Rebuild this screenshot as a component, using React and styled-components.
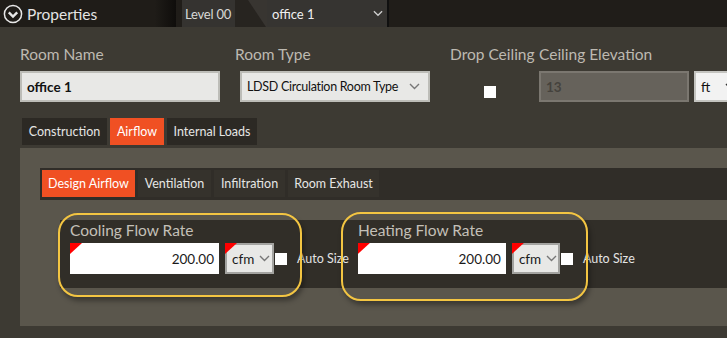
import React from "react";
import styled, { createGlobalStyle } from "styled-components";

const GlobalStyle = createGlobalStyle`
  html, body { margin: 0; padding: 0; }
  body {
    background: #3d3a33;
    font-family: Lato, "Noto Sans", sans-serif;
    width: 727px;
    height: 338px;
    overflow: hidden;
  }
  * { box-sizing: border-box; }
`;

const Page = styled.div`
  width: 727px;
  height: 338px;
  overflow: hidden;
  background: #3d3a33;
`;

/* ---------- header ---------- */
const Header = styled.div`
  height: 27px;
  background: #201d19;
  display: flex;
  align-items: stretch;
`;

const TitleBlock = styled.div`
  width: 176px;
  flex: none;
  display: flex;
  align-items: center;
  gap: 4px;
  padding-left: 3px;
  background: linear-gradient(to right, #1f1c18 88%, #0f0d0b 100%);
  color: #e4e4e4;
  font-size: 15.5px;
`;

const LevelTab = styled.div`
  margin-left: 6px;
  width: 53px;
  flex: none;
  background: #353330;
  color: #d8d8d6;
  font-size: 13px;
  display: flex;
  align-items: center;
  padding-left: 3px;
  letter-spacing: -0.2px;
`;

const Slope = styled.div`
  width: 32px;
  flex: none;
  display: flex;
  svg { display: block; }
`;

const OfficeDrop = styled.div`
  width: 120px;
  flex: none;
  background: #363431;
  color: #f0f0f0;
  font-size: 13px;
  display: flex;
  align-items: center;
  justify-content: space-between;
  padding: 0 4px 0 5px;
  box-shadow: 2px 0 0 #101010;
`;

/* ---------- main ---------- */
const Main = styled.div`
  padding: 17px 0 0 20px;
`;

const FieldsRow = styled.div`
  display: flex;
  align-items: flex-start;
`;

const Field = styled.div`
  flex: none;
  display: flex;
  flex-direction: column;
  width: ${(p) => p.$w}px;
  margin-left: ${(p) => p.$ml || 0}px;
`;

const Label = styled.div`
  color: #bdb9b1;
  font-size: 15.5px;
  line-height: 20px;
  height: 20px;
  margin-bottom: 7px;
  white-space: nowrap;
`;

const TextBox = styled.div`
  flex: none;
  height: 31px;
  width: ${(p) => p.$w}px;
  margin-left: ${(p) => p.$ml || 0}px;
  background: ${(p) => p.$bg || "#e8e8e6"};
  border: 2px solid ${(p) => p.$border || "#bdbdb8"};
  color: ${(p) => p.$color || "#111"};
  font-size: ${(p) => p.$fs || 13.5}px;
  letter-spacing: ${(p) => p.$ls || 0}px;
  font-weight: ${(p) => (p.$bold ? 700 : 400)};
  display: flex;
  align-items: center;
  justify-content: space-between;
  padding: 0 ${(p) => p.$pr || 6}px 0 5px;
  white-space: nowrap;
  overflow: hidden;
`;

const CheckWrap = styled.div`
  display: flex;
  padding: 15px 0 0 ${(p) => p.$pl || 0}px;
`;

const Check = styled.div`
  width: 12px;
  height: 12px;
  background: #ffffff;
  flex: none;
  margin-left: ${(p) => p.$ml || 0}px;
`;

const InlineRow = styled.div`
  display: flex;
  gap: 5px;
`;

/* ---------- tabs ---------- */
const TabBar = styled.div`
  display: flex;
  gap: ${(p) => p.$gap}px;
  margin: ${(p) => p.$margin || 0};
  padding: ${(p) => p.$pad || 0};
  background: ${(p) => p.$bg || "transparent"};
`;

const Tab = styled.div`
  height: 27px;
  width: ${(p) => p.$w}px;
  flex: none;
  display: flex;
  align-items: center;
  justify-content: center;
  background: ${(p) => (p.$active ? "#f05023" : p.$bg || "#2c2924")};
  color: ${(p) => (p.$active ? "#ffffff" : "#e6e6e4")};
  font-size: 12.5px;
  white-space: nowrap;
`;

const Panel = styled.div`
  margin-top: 3px;
  background: #5a564c;
  height: 178px;
  padding: 20px 0 0 20px;
`;

const FlowStrip = styled.div`
  margin: 20px 0 0 20px;
  height: 68px;
  background: #312e28;
  display: flex;
  align-items: flex-start;
  gap: 9px;
  padding: 0 0 0 10px;
`;

const FlowGroup = styled.div`
  position: relative;
  flex: none;
  display: flex;
  flex-direction: column;
  &::before {
    content: "";
    position: absolute;
    left: ${(p) => p.$ring[0]}px;
    top: ${(p) => p.$ring[1]}px;
    width: ${(p) => p.$ring[2]}px;
    height: ${(p) => p.$ring[3]}px;
    border: 2px solid #f3c542;
    border-radius: 20px;
    box-shadow: 2px 4px 5px rgba(0, 0, 0, 0.35);
    pointer-events: none;
  }
`;

const FlowLabel = styled.div`
  color: #c4c0b8;
  font-size: 15.5px;
  line-height: 20px;
  height: 20px;
  margin-bottom: 3px;
  white-space: nowrap;
`;

const FlowRow = styled.div`
  display: flex;
  align-items: center;
`;

const Flagged = styled.div`
  position: relative;
  flex: none;
  height: 31px;
  width: ${(p) => p.$w}px;
  margin-right: ${(p) => p.$mr || 0}px;
  background: ${(p) => p.$bg};
  border: ${(p) => (p.$border ? `2px solid ${p.$border}` : "none")};
  color: #1a1a1a;
  font-size: 13.5px;
  display: flex;
  align-items: center;
  justify-content: ${(p) => p.$justify};
  gap: 5px;
  padding: 0 ${(p) => p.$pr}px 0 ${(p) => p.$pl}px;
  &::before {
    content: "";
    position: absolute;
    left: ${(p) => (p.$border ? -2 : 0)}px;
    top: ${(p) => (p.$border ? -2 : 0)}px;
    width: 12px;
    height: 11px;
    background: #ff0000;
    clip-path: polygon(0 0, 100% 0, 0 100%);
  }
`;

const AutoSize = styled.div`
  color: #e4e4e4;
  font-size: 12.5px;
  margin-left: 10px;
  white-space: nowrap;
`;

const Chevron = ({ color = "#777", w = 11 }) => (
  <svg width={w} height="7" viewBox="0 0 11 7" style={{ flex: "none" }}>
    <polyline points="1,1 5.5,5.5 10,1" fill="none" stroke={color} strokeWidth="1.4" />
  </svg>
);

const CircleChevron = () => (
  <svg width="20" height="20" viewBox="0 0 20 20">
    <circle cx="10" cy="10" r="8.6" fill="none" stroke="#e8e8e8" strokeWidth="1.5" />
    <polyline points="5.8,8.3 10,12.5 14.2,8.3" fill="none" stroke="#e8e8e8" strokeWidth="2.4" />
  </svg>
);

const FlowRate = ({ title, ring, inputW, selW }) => (
  <FlowGroup $ring={ring}>
    <FlowLabel>{title}</FlowLabel>
    <FlowRow>
      <Flagged $w={inputW} $bg="#ffffff" $justify="flex-end" $pl={4} $pr={5} $mr={6}>
        200.00
      </Flagged>
      <Flagged $w={selW} $bg="#e8e8e6" $border="#a3a3a0" $justify="flex-start" $pl={5} $pr={2}>
        cfm <Chevron />
      </Flagged>
      <Check $ml={1} />
      <AutoSize>Auto Size</AutoSize>
    </FlowRow>
  </FlowGroup>
);

export default function App() {
  return (
    <Page>
      <GlobalStyle />
      <Header>
        <TitleBlock>
          <CircleChevron />
          <span>Properties</span>
        </TitleBlock>
        <LevelTab>Level 00</LevelTab>
        <Slope>
          <svg width="32" height="27" viewBox="0 0 32 27">
            <rect x="0" y="0" width="32" height="27" fill="#272420" />
            <polygon points="13,0 32,0 32,27 31,27" fill="#383531" />
          </svg>
        </Slope>
        <OfficeDrop>
          <span>office 1</span>
          <Chevron color="#cfcfcf" w={10} />
        </OfficeDrop>
      </Header>

      <Main>
        <FieldsRow>
          <Field $w={200}>
            <Label>Room Name</Label>
            <TextBox $w={200} $bold>office 1</TextBox>
          </Field>
          <Field $w={195} $ml={15}>
            <Label>Room Type</Label>
            <TextBox $w={190} $ml={5} $fs={12.5} $ls={-0.3} $pr={8}>
              LDSD Circulation Room Type <Chevron />
            </TextBox>
          </Field>
          <Field $w={89} $ml={20}>
            <Label>Drop Ceiling</Label>
            <CheckWrap $pl={34}>
              <Check />
            </CheckWrap>
          </Field>
          <Field $w={200}>
            <Label>Ceiling Elevation</Label>
            <InlineRow>
              <TextBox $w={150} $bg="#66625b" $border="#7b7770" $color="#45423d" $bold>
                13
              </TextBox>
              <TextBox $w={50} $bg="#f2f2f2" $border="#c4c4c0" $color="#111">
                ft <Chevron color="#333" />
              </TextBox>
            </InlineRow>
          </Field>
        </FieldsRow>

        <TabBar $gap={3} $margin="16px 0 0 2px">
          <Tab $w={85}>Construction</Tab>
          <Tab $w={54} $active>Airflow</Tab>
          <Tab $w={90}>Internal Loads</Tab>
        </TabBar>

        <Panel>
          <TabBar $gap={3} $pad="2px 0 3px 2px" $bg="#302d28">
            <Tab $w={93} $active>Design Airflow</Tab>
            <Tab $w={73} $bg="#35322c">Ventilation</Tab>
            <Tab $w={71} $bg="#35322c">Infiltration</Tab>
            <Tab $w={91} $bg="#35322c">Room Exhaust</Tab>
          </TabBar>
          <FlowStrip>
            <FlowRate title="Cooling Flow Rate" ring={[-12, -7, 240, 80]} inputW={149} selW={49} />
            <FlowRate title="Heating Flow Rate" ring={[-17, -8, 243, 85]} inputW={148} selW={48} />
          </FlowStrip>
        </Panel>
      </Main>
    </Page>
  );
}
